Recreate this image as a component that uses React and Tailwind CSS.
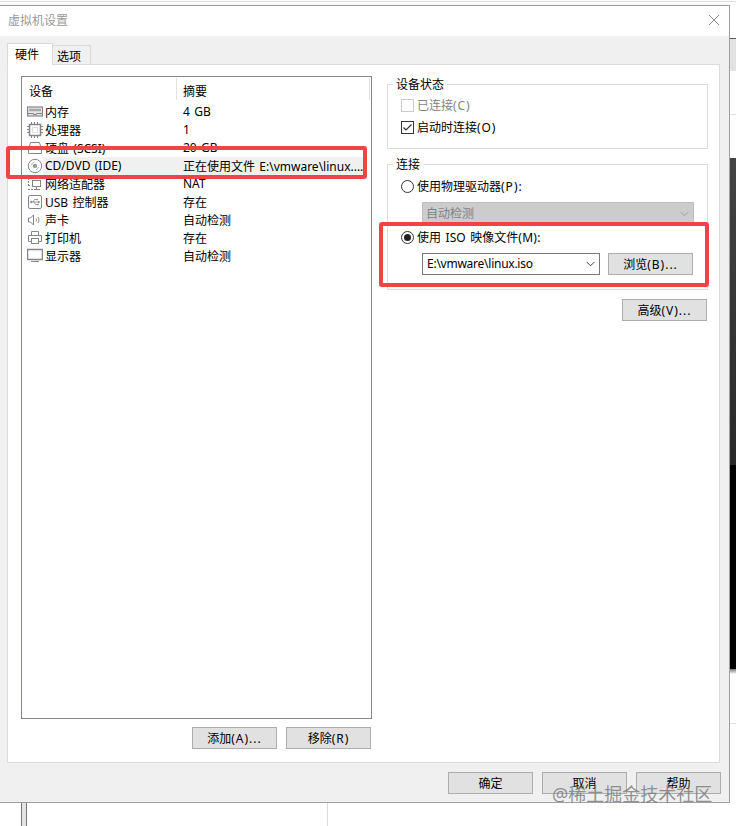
import React, { useState } from 'react';
import clsx from 'clsx';

const iconProps = {
  width: 16,
  height: 16,
  viewBox: '0 0 16 16',
  fill: 'none',
  stroke: '#858585',
  strokeWidth: 1,
  className: 'shrink-0',
};

const icons = {
  memory: (
    <svg {...iconProps}>
      <rect x="0.5" y="3" width="15" height="9" fill="#e6e6e6" strokeWidth="1.200" />
      <path d="M2 6h12" strokeWidth="2.500" stroke="#a8a8a8" />
      <path d="M1 9.500h5.500v1h3v-1h5.500" />
    </svg>
  ),
  cpu: (
    <svg {...iconProps}>
      <rect x="2.500" y="2.500" width="11" height="11" strokeWidth="1.500" />
      <path d="M5.500 5.500h5v5h-5z" stroke="#bbb" strokeDasharray="1 1" />
      <path d="M4.500 0v2M7.500 0v2M10.500 0v2M4.500 14v2M7.500 14v2M10.500 14v2M0 4.500h2M0 7.500h2M0 10.500h2M14 4.500h2M14 7.500h2M14 10.500h2" />
    </svg>
  ),
  disk: (
    <svg {...iconProps}>
      <path d="M3.500 2.500h9l2 7v4h-13v-4zM1.500 9.500h13" />
    </svg>
  ),
  disc: (
    <svg {...iconProps}>
      <circle cx="8" cy="8" r="6.700" />
      <circle cx="8" cy="8" r="1.300" strokeWidth="1.500" />
      <path d="M4.500 7c.4-1.400 1.200-2.200 2.500-2.600M11.500 9c-.4 1.400-1.200 2.200-2.500 2.600" stroke="#aaa" />
    </svg>
  ),
  network: (
    <svg {...iconProps}>
      <rect x="5.500" y="4.500" width="8" height="6" />
      <path d="M9.500 11v2.500M7 13.500h6" />
      <path d="M1.500 2v7M2 1.500h8M1 9.500h3M1 13.500h5" strokeDasharray="2 1" />
    </svg>
  ),
  usb: (
    <svg {...iconProps}>
      <rect x="1.500" y="1.500" width="13" height="13" rx="1.500" />
      <path d="M4 8h8M6 8l1.500-2.500h2M7 8l1.500 2.500h2" stroke="#999" />
      <path d="M3.500 7.200h1.500v1.500h-1.500zM9.500 5h1v1h-1zM10.500 10h1v1h-1zM11.500 7l1.500 1l-1.500 1z" fill="#858585" strokeWidth=".5" />
    </svg>
  ),
  sound: (
    <svg {...iconProps}>
      <path d="M1.500 6v4h2l3 3V3l-3 3z" />
      <path d="M9 6.500c.6 1 .6 2 0 3M11 5c1.200 2 1.200 4 0 6" />
    </svg>
  ),
  printer: (
    <svg {...iconProps}>
      <path d="M4.500 5.500v-4h7v4M4.500 11.500h-3v-6h13v6h-3" />
      <rect x="4.500" y="8.500" width="7" height="5" />
    </svg>
  ),
  display: (
    <svg {...iconProps}>
      <path d="M.5 1.500h15v10H.5z" strokeWidth="1.500" />
      <path d="M4 13.500h8" />
    </svg>
  ),
};

const devices = [
  { icon: 'memory', name: '内存', summary: '4 GB' },
  { icon: 'cpu', name: '处理器', summary: '1' },
  { icon: 'disk', name: '硬盘 (SCSI)', summary: '20 GB' },
  { icon: 'disc', name: 'CD/DVD (IDE)', summary: '正在使用文件 E:\\vmware\\linux....' },
  { icon: 'network', name: '网络适配器', summary: 'NAT' },
  { icon: 'usb', name: 'USB 控制器', summary: '存在' },
  { icon: 'sound', name: '声卡', summary: '自动检测' },
  { icon: 'printer', name: '打印机', summary: '存在' },
  { icon: 'display', name: '显示器', summary: '自动检测' },
];

// latin glyphs sit a pixel higher than the chinese ones
const isLatin = (text) => /^[\x20-\x7e]+$/.test(text);

function DialogButton({ label, hotkey }) {
  return (
    <button className="flex h-[22px] w-[85px] shrink-0 items-center justify-center border border-[#adadad] bg-[#e1e1e1] pt-[2px]">
      {label}
      {hotkey && <span className="tracking-[1px]">{hotkey}</span>}
    </button>
  );
}

function Chevron({ color }) {
  return (
    <svg width="9" height="6" viewBox="0 0 9 6" fill="none" stroke={color} className="shrink-0">
      <path d="M.5 .8l4 4l4-4" />
    </svg>
  );
}

function Radio({ checked }) {
  return (
    <span className="mr-[3px] flex size-[13px] shrink-0 items-center justify-center rounded-full border border-[#333]">
      {checked && <span className="size-[7px] rounded-full bg-[#222]" />}
    </span>
  );
}

function DeviceList({ selected, onSelect }) {
  return (
    <div className="h-[643px] w-[351px] border border-[#828790] bg-white">
      <div className="flex h-[26px] pt-px leading-[28px]">
        <div className="h-[22px] w-[155px] border-r border-[#e0e0e0] pl-[7px]">设备</div>
        <div className="h-[22px] w-[193px] border-r border-[#e0e0e0] pl-[6px]">摘要</div>
      </div>
      {devices.map((d, i) => (
        <div key={d.icon} className="flex h-[18px] items-center pl-[5px]" onClick={() => onSelect(i)}>
          {icons[d.icon]}
          <div
            className={clsx(
              'flex h-[18px] w-[322px] pl-[2px] leading-[19px] [word-spacing:1.2px]',
              selected === i && 'bg-[#f0f0f0]'
            )}
          >
            <span className={clsx('w-[138px] shrink-0', isLatin(d.name) && '-mt-px')}>{d.name}</span>
            <span className={clsx('whitespace-nowrap', isLatin(d.summary) && '-mt-px')}>{d.summary}</span>
          </div>
        </div>
      ))}
    </div>
  );
}

function DeviceStatus() {
  return (
    <fieldset className="h-[73px] w-[321px] border border-[#dcdcdc] pl-[13px]">
      <legend className="-ml-[8px] h-4 px-[3px] leading-[17px]">设备状态</legend>
      <div className="mt-[2px] flex h-[22px] items-center text-[#838383]">
        <span className="mr-[3px] size-[13px] border border-[#ccc]" />
        <span className="pt-[2px]">
          已连接<span className="tracking-[0.9px]">(C)</span>
        </span>
      </div>
      <div className="flex h-[22px] items-center">
        <span className="mr-[3px] size-[13px] border border-[#333]">
          <svg width="11" height="11" viewBox="0 0 11 11" fill="none" stroke="#333" strokeWidth="1.200">
            <path d="M1.500 5.500l2.500 2.500l5.500-5.500" />
          </svg>
        </span>
        <span className="pt-[2px]">
          启动时连接<span className="tracking-[0.9px]">(O)</span>
        </span>
      </div>
    </fieldset>
  );
}

function Connection() {
  return (
    <fieldset className="mt-[7px] h-[134px] w-[321px] border border-[#dcdcdc] pl-[13px]">
      <legend className="-ml-[8px] h-4 px-[3px] leading-[18px]">连接</legend>
      <div className="mt-[3px] flex h-[22px] items-center">
        <Radio />
        <span className="pt-[2px]">
          使用物理驱动器<span className="tracking-[1px]">(P):</span>
        </span>
      </div>
      <div className="mt-[5px] ml-[21px] flex h-[22px] w-[272px] items-center justify-between border border-[#bfbfbf] bg-[#ccc] pt-[2px] pr-[4px] pl-[3px] text-[#838383]">
        自动检测
        <Chevron color="#a0a0a0" />
      </div>
      <div className="mt-[2px] flex h-[22px] items-center pt-px [word-spacing:1.5px]">
        <Radio checked />
        使用 ISO 映像文件<span className="tracking-[0.3px]">(M):</span>
      </div>
      <div className="mt-[5px] ml-[21px] flex gap-[8px]">
        <div className="flex h-[22px] w-[178px] items-center justify-between border border-[#7a7a7a] bg-white pr-[4px] pl-[4px] tracking-[-0.25px]">
          E:\vmware\linux.iso
          <Chevron color="#444" />
        </div>
        <DialogButton label="浏览" hotkey="(B)..." />
      </div>
    </fieldset>
  );
}

export default function App() {
  const [selected, setSelected] = useState(3);

  return (
    <div className="relative flex h-[826px] w-[736px] overflow-hidden bg-white font-['Noto_Sans','Noto_Sans_CJK_SC',sans-serif] text-[12px] text-black">
      <div className="flex w-[730px] flex-col">
        <div className="h-[5px] shrink-0 border-b border-[#f5f5f5] pt-px">
          <div className="h-px bg-[#dedede]" />
        </div>

        <div className="flex h-[798px] shrink-0 flex-col border-t border-r border-b border-[#a0a0a0] bg-[#f0f0f0]">
          <div className="flex h-[30px] shrink-0 items-center justify-between bg-white pr-[9px] pl-[8px] text-[#999]">
            虚拟机设置
            <svg width="12" height="12" viewBox="0 0 12 12" fill="none" stroke="#888" className="-mt-[2px]">
              <path d="M1 1l10 10M11 1L1 11" />
            </svg>
          </div>

          <div className="flex h-[28px] shrink-0 items-end pl-[7px]">
            <div className="z-10 -mb-px h-[22px] w-[46px] border border-b-0 border-[#d9d9d9] bg-white pl-[7px] leading-[22px]">
              硬件
            </div>
            <div className="h-[19px] w-[38px] border border-l-0 border-b-0 border-[#d9d9d9] bg-[#f0f0f0] pl-[4px] leading-[21px]">
              选项
            </div>
          </div>

          <div className="ml-[7px] flex h-[699px] w-[713px] shrink-0 border border-[#dcdcdc] bg-white pt-[11px] pl-[13px]">
            <div>
              <DeviceList selected={selected} onSelect={setSelected} />
              <div className="mt-[8px] flex justify-end gap-[9px] pr-px">
                <DialogButton label="添加" hotkey="(A)..." />
                <DialogButton label="移除" hotkey="(R)" />
              </div>
            </div>
            <div className="ml-[15px] w-[321px]">
              <DeviceStatus />
              <Connection />
              <div className="mt-[9px] flex justify-end pr-px">
                <DialogButton label="高级" hotkey="(V)..." />
              </div>
            </div>
          </div>

          <div className="mt-[9px] flex justify-end gap-[9px] pr-[8px]">
            <DialogButton label="确定" />
            <DialogButton label="取消" />
            <DialogButton label="帮助" />
          </div>
        </div>

        <div className="flex h-[23px] pl-[21px]">
          <div className="w-[6px] border-r border-l border-[#777] bg-[#e5e5e5]" />
          <div className="w-[301px] border-r border-[#dedede]" />
        </div>
      </div>

      {/* sliver of the window behind the dialog */}
      <div className="flex w-[6px] flex-col">
        <div className="mt-px h-[37px] border-t border-[#dedede]" />
        <div className="h-[33px] border-t border-[#555] bg-[#e3e3e3]" />
        <div className="h-[44px] border-b border-[#dedede]" />
        <div className="h-[43px]" />
        <div className="h-[307px] bg-linear-to-b from-[#444] to-[#292929]" />
        <div className="h-[204px] bg-black" />
        <div className="h-[5px] bg-linear-to-b from-[#777] to-white" />
        <div className="h-[50px] border-b border-[#dedede]" />
      </div>

      <div className="pointer-events-none absolute top-[146px] left-[6px] z-20 h-[33px] w-[361px] rounded-[3px] border-4 border-[#f04343]" />
      <div className="pointer-events-none absolute top-[222px] left-[379px] z-20 h-[65px] w-[330px] rounded-[3px] border-4 border-[#f04343]" />
      <div className="pointer-events-none absolute top-[782px] left-[552px] z-20 text-[18px] leading-[24px] whitespace-nowrap text-[#777]/80">
        @稀土掘金技术社区
      </div>
    </div>
  );
}
